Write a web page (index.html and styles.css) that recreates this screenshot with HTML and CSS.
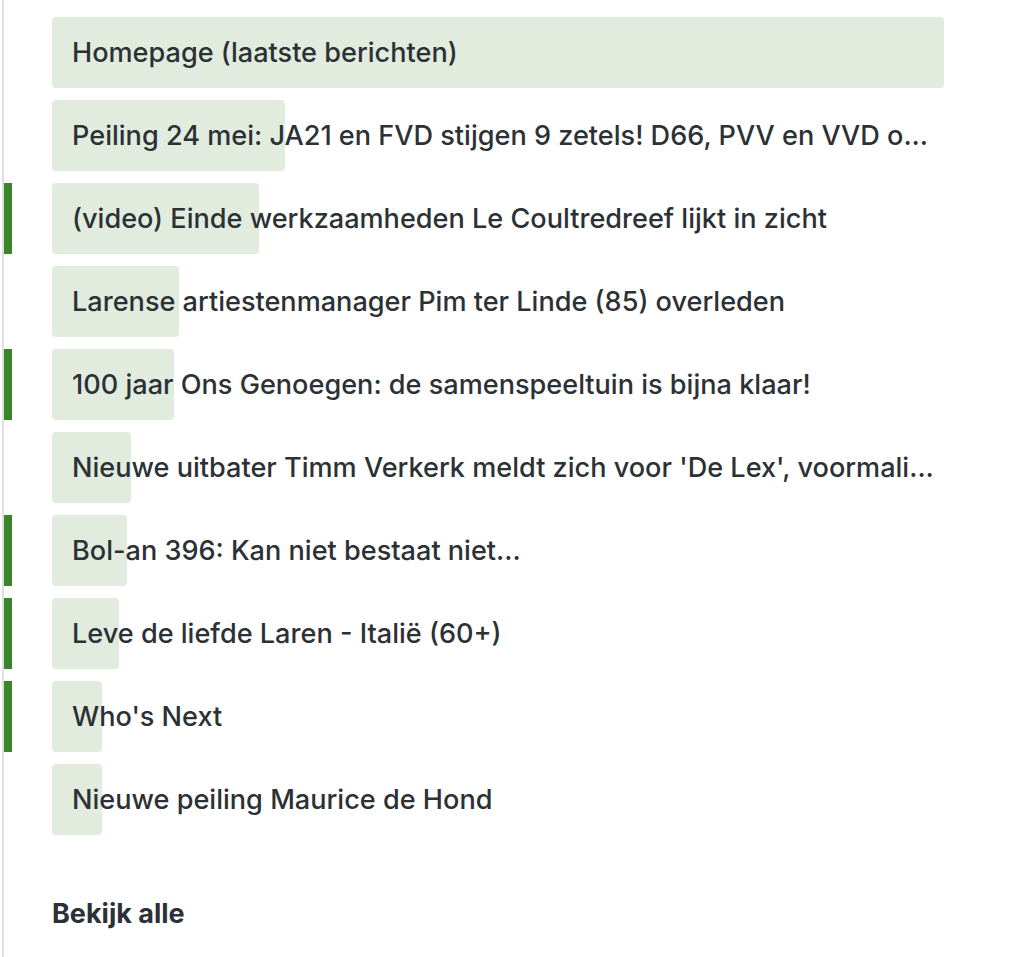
FILE: index.html
```html
<!DOCTYPE html>
<html lang="nl">
<head>
    <meta charset="UTF-8">
    <meta name="viewport" content="width=device-width, initial-scale=1.0">
    <title>Laatste berichten</title>
    <link rel="stylesheet" href="styles.css">
</head>
<body>

<div class="sidebar">
    <ul class="post-list">
        <li class="post">
            <span class="marker"></span>
            <a class="post-link" href="#">
                <span class="bar" style="width: 100%"></span>
                <span class="title">Homepage (laatste berichten)</span>
            </a>
        </li>
        <li class="post">
            <span class="marker"></span>
            <a class="post-link" href="#">
                <span class="bar" style="width: 233px"></span>
                <span class="title">Peiling 24 mei: JA21 en FVD stijgen 9 zetels! D66, PVV en VVD o...</span>
            </a>
        </li>
        <li class="post active">
            <span class="marker"></span>
            <a class="post-link" href="#">
                <span class="bar" style="width: 207px"></span>
                <span class="title">(video) Einde werkzaamheden Le Coultredreef lijkt in zicht</span>
            </a>
        </li>
        <li class="post">
            <span class="marker"></span>
            <a class="post-link" href="#">
                <span class="bar" style="width: 127px"></span>
                <span class="title">Larense artiestenmanager Pim ter Linde (85) overleden</span>
            </a>
        </li>
        <li class="post active">
            <span class="marker"></span>
            <a class="post-link" href="#">
                <span class="bar" style="width: 122px"></span>
                <span class="title">100 jaar Ons Genoegen: de samenspeeltuin is bijna klaar!</span>
            </a>
        </li>
        <li class="post">
            <span class="marker"></span>
            <a class="post-link" href="#">
                <span class="bar" style="width: 79px"></span>
                <span class="title">Nieuwe uitbater Timm Verkerk meldt zich voor 'De Lex', voormali...</span>
            </a>
        </li>
        <li class="post active">
            <span class="marker"></span>
            <a class="post-link" href="#">
                <span class="bar" style="width: 75px"></span>
                <span class="title">Bol-an 396: Kan niet bestaat niet...</span>
            </a>
        </li>
        <li class="post active">
            <span class="marker"></span>
            <a class="post-link" href="#">
                <span class="bar" style="width: 67px"></span>
                <span class="title">Leve de liefde Laren - Italië (60+)</span>
            </a>
        </li>
        <li class="post active">
            <span class="marker"></span>
            <a class="post-link" href="#">
                <span class="bar" style="width: 50px"></span>
                <span class="title">Who's Next</span>
            </a>
        </li>
        <li class="post">
            <span class="marker"></span>
            <a class="post-link" href="#">
                <span class="bar" style="width: 50px"></span>
                <span class="title">Nieuwe peiling Maurice de Hond</span>
            </a>
        </li>
    </ul>

    <a class="view-all" href="#">Bekijk alle</a>
</div>

</body>
</html>
```

FILE: styles.css
```css
body {
    margin: 0;
    font-family: Inter, "Noto Sans", Arial, sans-serif;
    background-color: white;
    color: #2c3135;
}
.sidebar {
    margin-left: 2px;
    border-left: 2px solid #dedede;
    min-height: 957px;
    padding-top: 17px;
    padding-right: 80px;
    box-sizing: border-box;
}
.post-list {
    list-style: none;
    margin: 0;
    padding: 0;
    display: flex;
    flex-direction: column;
    gap: 12px;
}
.post {
    display: flex;
    gap: 40px;
    height: 71px;
}
.marker {
    width: 8px;
    flex-shrink: 0;
}
.post.active .marker {
    background-color: #39862b;
}
.post-link {
    position: relative;
    flex: 1;
    min-width: 0;
    display: flex;
    align-items: center;
    padding: 0 8px 0 20px;
    color: inherit;
    text-decoration: none;
}
.bar {
    position: absolute;
    left: 0;
    top: 0;
    bottom: 0;
    background-color: #e1ecdf;
    border-radius: 4px;
}
.title {
    position: relative;
    font-size: 27.1px;
    font-weight: 500;
    white-space: nowrap;
}
.view-all {
    display: inline-block;
    margin-top: 62px;
    margin-left: 48px;
    font-size: 27px;
    font-weight: 700;
    color: inherit;
    text-decoration: none;
}
```
